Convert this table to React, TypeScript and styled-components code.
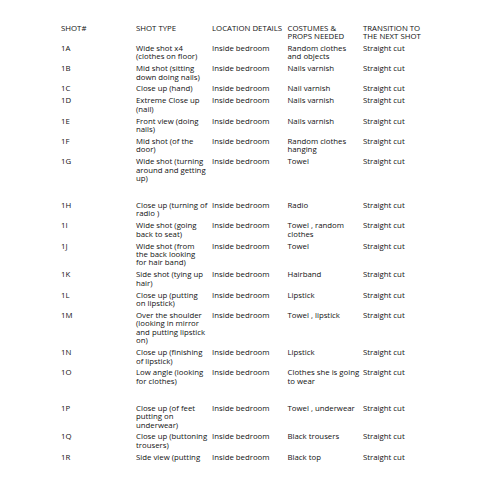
import React from 'react';
import styled, { createGlobalStyle } from 'styled-components';

type Shot = {
    id: string;
    type: string[];
    location: string[];
    props: string[];
    transition: string[];
    extra?: number;
};

const HEADER = ['SHOT#', 'SHOT TYPE', 'LOCATION DETAILS', 'COSTUMES &|PROPS NEEDED', 'TRANSITION TO|THE NEXT SHOT'];

const BED = ['Inside bedroom'];
const CUT = ['Straight cut'];

const shots: Shot[] = [
    { id: '1A', type: ['Wide shot x4', '(clothes on floor)'], location: BED, props: ['Random clothes', 'and objects'], transition: CUT },
    { id: '1B', type: ['Mid shot (sitting', 'down doing nails)'], location: BED, props: ['Nails varnish'], transition: CUT },
    { id: '1C', type: ['Close up (hand)'], location: BED, props: ['Nail varnish'], transition: CUT },
    { id: '1D', type: ['Extreme Close up', '(nail)'], location: BED, props: ['Nails varnish'], transition: CUT },
    { id: '1E', type: ['Front view (doing', 'nails)'], location: BED, props: ['Nails varnish'], transition: CUT },
    { id: '1F', type: ['Mid shot (of the', 'door)'], location: BED, props: ['Random clothes', 'hanging'], transition: CUT },
    { id: '1G', type: ['Wide shot (turning', 'around and getting', 'up)'], location: BED, props: ['Towel'], transition: CUT, extra: 15 },
    { id: '1H', type: ['Close up (turning of', 'radio )'], location: BED, props: ['Radio'], transition: CUT },
    { id: '1I', type: ['Wide shot (going', 'back to seat)'], location: BED, props: ['Towel , random', 'clothes'], transition: CUT },
    { id: '1J', type: ['Wide shot (from', 'the back looking', 'for hair band)'], location: BED, props: ['Towel'], transition: CUT },
    { id: '1K', type: ['Side shot (tying up', 'hair)'], location: BED, props: ['Hairband'], transition: CUT },
    { id: '1L', type: ['Close up (putting', 'on lipstick)'], location: BED, props: ['Lipstick'], transition: CUT },
    { id: '1M', type: ['Over the shoulder', '(looking in mirror', 'and putting lipstick', 'on)'], location: BED, props: ['Towel , lipstick'], transition: CUT },
    { id: '1N', type: ['Close up (finishing', 'of lipstick)'], location: BED, props: ['Lipstick'], transition: CUT },
    { id: '1O', type: ['Low angle (looking', 'for clothes)'], location: BED, props: ['Clothes she is going', 'to wear'], transition: CUT, extra: 15 },
    { id: '1P', type: ['Close up (of feet', 'putting on', 'underwear)'], location: BED, props: ['Towel , underwear'], transition: CUT },
    { id: '1Q', type: ['Close up (buttoning', 'trousers)'], location: BED, props: ['Black trousers'], transition: CUT },
    { id: '1R', type: ['Side view (putting'], location: BED, props: ['Black top'], transition: CUT },
];

const GlobalStyle = createGlobalStyle`
    html, body {
        margin: 0;
        padding: 0;
        background: #ffffff;
    }
    body {
        font-family: 'Open Sans', 'Noto Sans', sans-serif;
        color: #111;
    }
`;

const Page = styled.div`
    width: 495px;
    height: 495px;
    overflow: hidden;
    box-sizing: border-box;
    padding: 23.5px 0 0 61px;
    background: #fff;
`;

const Row = styled.div<{ $extra?: number }>`
    display: grid;
    grid-template-columns: 75px 76px 75.5px 75.5px 80px;
    padding-bottom: ${p => 3.5 + (p.$extra ?? 0)}px;
`;

const Cell = styled.div`
    display: flex;
    flex-direction: column;
    font-size: 7.8px;
    line-height: 8.4px;
    white-space: nowrap;
`;

const Line = styled.span`
    display: block;
`;

const renderLines = (lines: string[]) =>
    lines.map((l, i) => <Line key={i}>{l}</Line>);

export default function App() {
    return (
        <>
            <GlobalStyle />
            <Page>
                <Row>
                    {HEADER.map(h => (
                        <Cell key={h}>{renderLines(h.split('|'))}</Cell>
                    ))}
                </Row>
                {shots.map(s => (
                    <Row key={s.id} $extra={s.extra}>
                        <Cell>{s.id}</Cell>
                        <Cell>{renderLines(s.type)}</Cell>
                        <Cell>{renderLines(s.location)}</Cell>
                        <Cell>{renderLines(s.props)}</Cell>
                        <Cell>{renderLines(s.transition)}</Cell>
                    </Row>
                ))}
            </Page>
        </>
    );
}
